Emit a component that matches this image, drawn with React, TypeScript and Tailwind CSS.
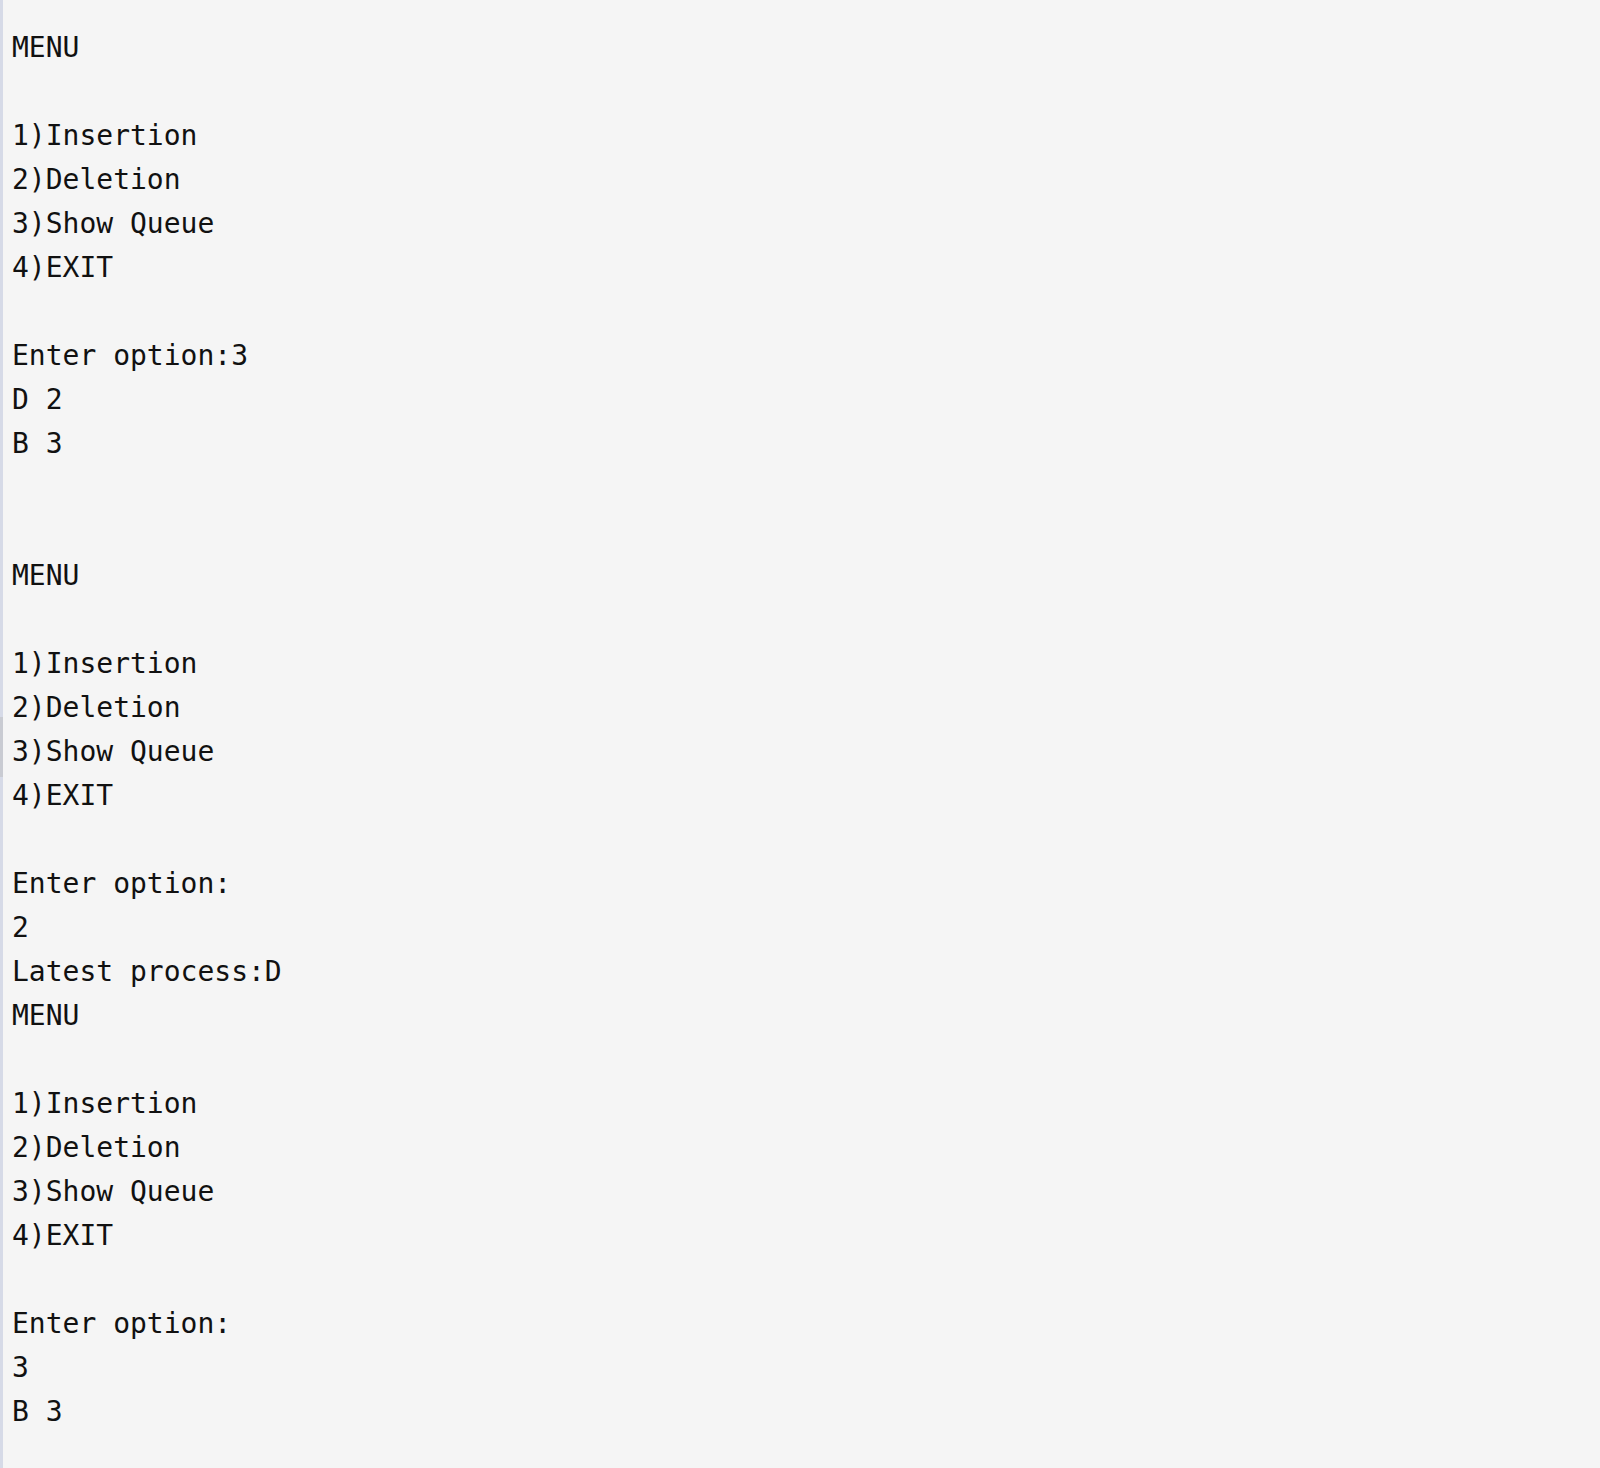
import React from "react";

const lines: string[] = [
  "MENU",
  "",
  "1)Insertion",
  "2)Deletion",
  "3)Show Queue",
  "4)EXIT",
  "",
  "Enter option:3",
  "D 2",
  "B 3",
  "",
  "",
  "MENU",
  "",
  "1)Insertion",
  "2)Deletion",
  "3)Show Queue",
  "4)EXIT",
  "",
  "Enter option:",
  "2",
  "Latest process:D",
  "MENU",
  "",
  "1)Insertion",
  "2)Deletion",
  "3)Show Queue",
  "4)EXIT",
  "",
  "Enter option:",
  "3",
  "B 3",
];

export default function App() {
  return (
    <div className="flex w-[1600px] h-[1468px] bg-[#f5f5f5] overflow-hidden">
      <div className="flex flex-col w-[3px] shrink-0 bg-[#d6dae7]">
        <div className="h-[717px] shrink-0" />
        <div className="h-[60px] shrink-0 bg-[#c9cbd2]" />
      </div>
      <div
        className="pl-[9px] pt-[26px] text-[28px] leading-[44px] text-[#111111] whitespace-pre"
        style={{ fontFamily: '"DejaVu Sans Mono", monospace' }}
      >
        {lines.map((l, i) => (
          <div key={i} className="h-[44px]">
            {l}
          </div>
        ))}
      </div>
    </div>
  );
}
